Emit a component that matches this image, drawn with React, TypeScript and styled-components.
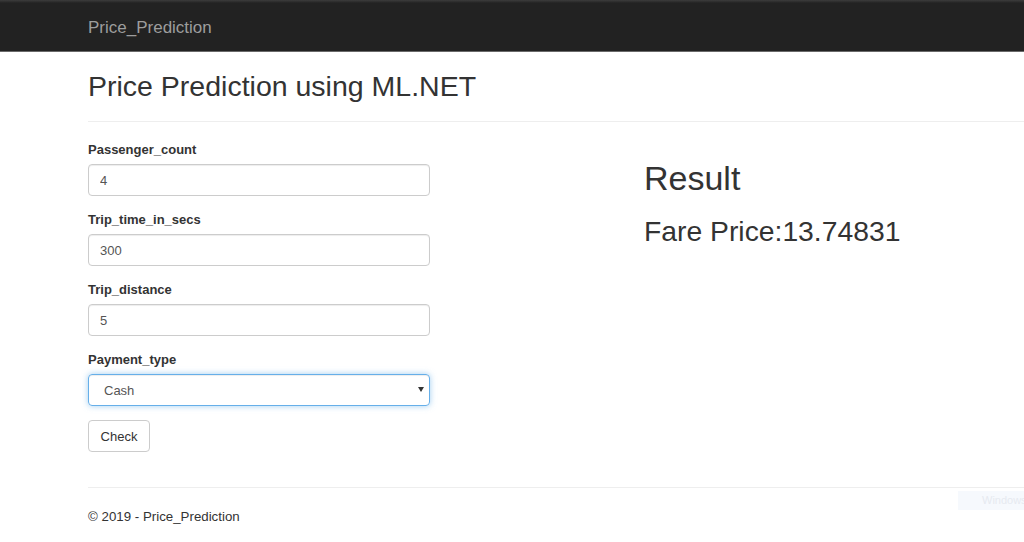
import React from "react";
import styled, { createGlobalStyle } from "styled-components";

const Global = createGlobalStyle`
  html, body { margin: 0; padding: 0; background: #fff; overflow: hidden; }
  body { font-family: "Liberation Sans", Arial, Helvetica, sans-serif; color: #333; font-size: 13px; }
  * { box-sizing: border-box; }
`;

const Navbar = styled.nav`
  height: 52px;
  background: linear-gradient(to bottom, #3c3c3c 0, #222 3px, #222 100%);
  border-bottom: 1px solid #6a6a6a;
  display: flex;
  align-items: center;
  padding-left: 88px;
`;

const Brand = styled.a`
  color: #9d9d9d;
  font-size: 17px;
  text-decoration: none;
  margin-top: 4px;
`;

const Container = styled.div`
  padding-left: 88px;
`;

const Title = styled.h2`
  margin: 0;
  padding-top: 18px;
  height: 69px;
  font-size: 28.5px;
  font-weight: 400;
  color: #333;
  line-height: 32px;
`;

const Rule = styled.hr`
  margin: 0;
  border: 0;
  border-top: 1px solid #eee;
`;

const Row = styled.div`
  display: flex;
  padding-top: 19px;
`;

const FormCol = styled.form`
  width: 342px;
  display: flex;
  flex-direction: column;
`;

const Group = styled.div`
  display: flex;
  flex-direction: column;
  margin-bottom: 15px;
`;

const Label = styled.label`
  font-weight: 700;
  font-size: 13px;
  line-height: 18px;
  margin-bottom: 5px;
  color: #333;
`;

const Input = styled.input`
  height: 32px;
  border: 1px solid #ccc;
  border-radius: 4px;
  padding: 0 11px;
  font-family: inherit;
  font-size: 13px;
  color: #555;
  box-shadow: inset 0 1px 1px rgba(0,0,0,0.075);
`;

const SelectWrap = styled.div`
  position: relative;
  height: 32px;
  border: 1px solid #66afe9;
  border-radius: 4px;
  box-shadow: inset 0 1px 1px rgba(0,0,0,.075), 0 0 6px rgba(102,175,233,.6);
  display: flex;
  align-items: center;
  padding: 0 15px;
  font-size: 13px;
  color: #555;
`;

const Arrow = styled.span`
  position: absolute;
  right: 5px;
  top: 12px;
  width: 0;
  height: 0;
  border-left: 3px solid transparent;
  border-right: 3px solid transparent;
  border-top: 5px solid #333;
`;

const Button = styled.button`
  align-self: flex-start;
  width: 62px;
  height: 32px;
  border: 1px solid #ccc;
  border-radius: 4px;
  background: #fff;
  font-family: inherit;
  font-size: 13px;
  color: #333;
  margin-top: -1px;
`;

const ResultCol = styled.div`
  margin-left: 214px;
  padding-top: 18px;
`;

const ResultTitle = styled.h2`
  margin: 0;
  font-size: 34px;
  font-weight: 400;
  line-height: 38px;
  color: #333;
`;

const Fare = styled.h3`
  margin: 18px 0 0;
  font-size: 28.3px;
  font-weight: 400;
  line-height: 32px;
  color: #333;
`;

const FooterRule = styled(Rule)`
  margin-top: 35px;
`;

const Footer = styled.footer`
  padding-top: 21px;
  font-size: 13.3px;
  color: #333;
`;

const Watermark = styled.div`
  position: absolute;
  right: 0;
  top: 491px;
  width: 66px;
  height: 19px;
  background: #f6f9fd;
  color: #e6eaf0;
  font-size: 11px;
  padding: 3px 0 0 24px;
  overflow: hidden;
  white-space: nowrap;
`;

export default function App() {
  return (
    <>
      <Global />
      <Navbar>
        <Brand href="#">Price_Prediction</Brand>
      </Navbar>
      <Container>
        <Title>Price Prediction using ML.NET</Title>
        <Rule />
        <Row>
          <FormCol>
            <Group>
              <Label>Passenger_count</Label>
              <Input defaultValue="4" />
            </Group>
            <Group>
              <Label>Trip_time_in_secs</Label>
              <Input defaultValue="300" />
            </Group>
            <Group>
              <Label>Trip_distance</Label>
              <Input defaultValue="5" />
            </Group>
            <Group>
              <Label>Payment_type</Label>
              <SelectWrap>
                Cash
                <Arrow />
              </SelectWrap>
            </Group>
            <Button type="button">Check</Button>
          </FormCol>
          <ResultCol>
            <ResultTitle>Result</ResultTitle>
            <Fare>Fare Price:13.74831</Fare>
          </ResultCol>
        </Row>
        <FooterRule />
        <Footer>© 2019 - Price_Prediction</Footer>
      </Container>
      <Watermark>Windows</Watermark>
    </>
  );
}
